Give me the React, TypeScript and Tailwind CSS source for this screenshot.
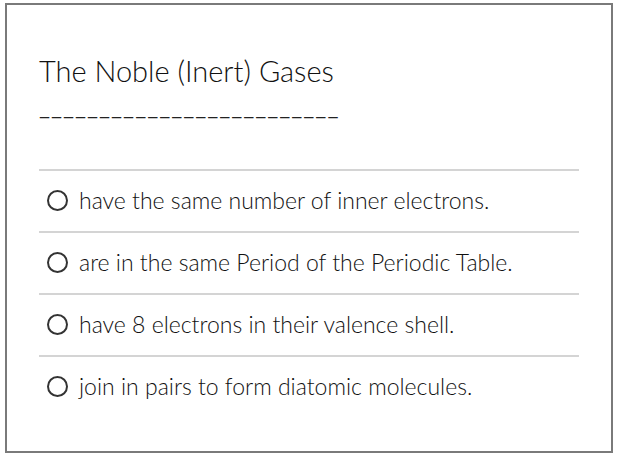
import React from "react";

const options = [
  "have the same number of inner electrons.",
  "are in the same Period of the Periodic Table.",
  "have 8 electrons in their valence shell.",
  "join in pairs to form diatomic molecules.",
];

export default function App() {
  return (
    <div
      className="w-[618px] h-[457px] bg-white overflow-hidden pt-[3px] pl-[5px]"
      style={{ fontFamily: "Lato, 'Open Sans', sans-serif" }}
    >
      <div className="w-[608px] h-[450px] border-2 border-[#7a7a7a] bg-white pl-[32px] pt-[50px]">
        <div className="text-[29px] leading-[32px] font-light text-[#111]">The Noble (Inert) Gases</div>
        <div className="mt-[7px] text-[24px] leading-[24px] text-[#222] tracking-[1px]">
          _________________________
        </div>
        <div className="mt-[51px] w-[540px]">
          {options.map((o, i) => (
            <div key={i} className="h-[62px] border-t-2 border-[#d4d4d4] flex items-center">
              <div className="w-[21px] h-[21px] rounded-full border-2 border-[#333] ml-[8px] mr-[11px] shrink-0 -mt-[1px]" />
              <span className="text-[23px] font-light text-[#111] -mt-[1px]">{o}</span>
            </div>
          ))}
        </div>
      </div>
    </div>
  );
}
